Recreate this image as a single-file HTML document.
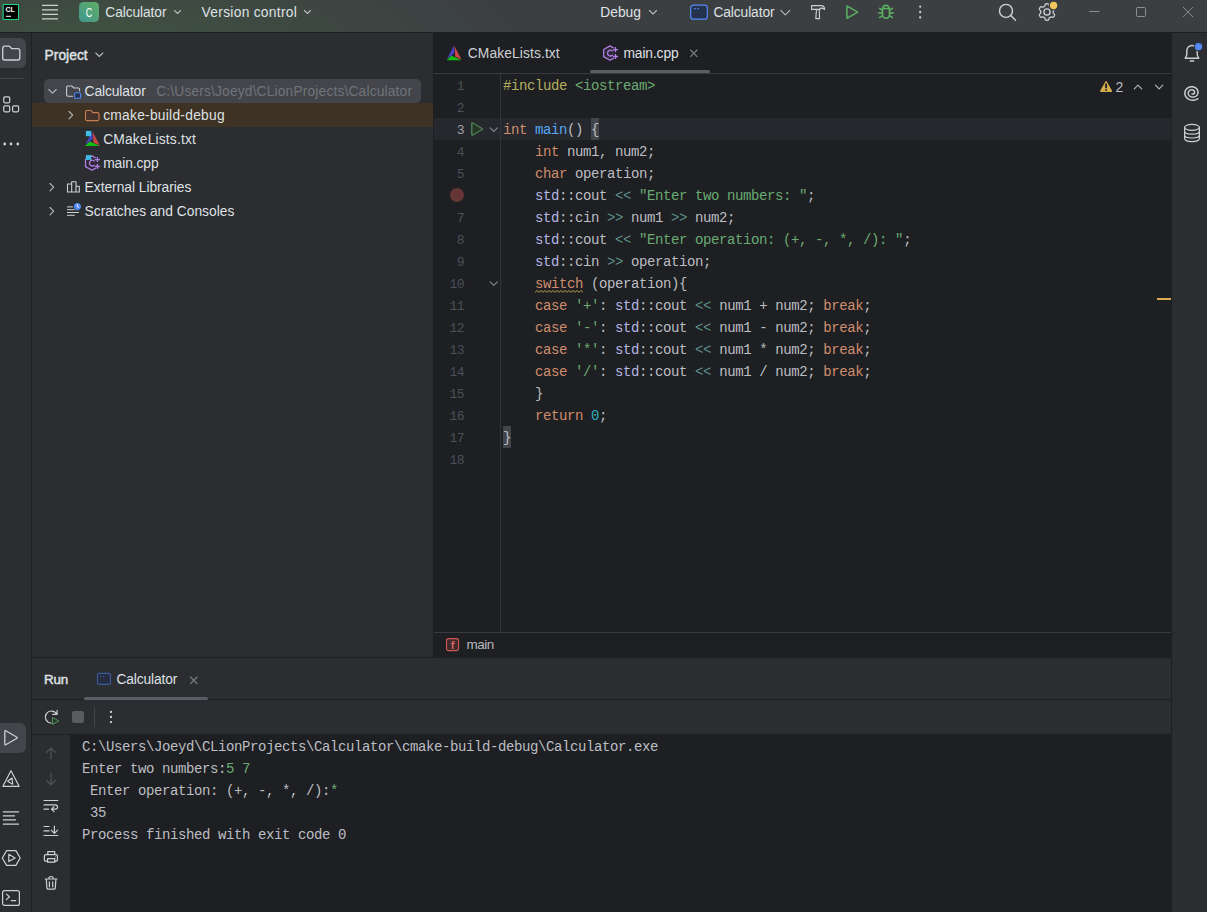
<!DOCTYPE html>
<html lang="en">
<head>
<meta charset="utf-8">
<title>Calculator – main.cpp</title>
<style>
*{box-sizing:border-box;margin:0;padding:0}
html,body{width:1207px;height:912px;overflow:hidden;background:#2b2d30}
body{position:relative;font-family:"Liberation Sans",sans-serif;font-size:13px;color:#dfe1e5}
.abs{position:absolute}
.t{position:absolute;white-space:pre;line-height:16px;height:16px}
svg{position:absolute;left:0;top:0;overflow:visible}
#title{left:0;top:0;width:1207px;height:32px;background:radial-gradient(ellipse 420px 95px at 100px 38px,#405240 0%,#3e4b41 35%,#3d4542 65%,#3c3f41 100%),#3c3f41}
#titleline{left:0;top:32px;width:1207px;height:1px;background:#1e1f22}
#lline{left:31px;top:33px;width:1px;height:879px;background:#1e1f22}
#projline{left:433px;top:33px;width:1px;height:624px;background:#1e1f22}
#editor{left:434px;top:33px;width:737px;height:625px;background:#1e1f22}
#rline{left:1171px;top:33px;width:1px;height:879px;background:#1e1f22}
#runline{left:32px;top:657px;width:1139px;height:1px;background:#1e1f22}
#runhline{left:32px;top:699px;width:1139px;height:1px;background:#1e1f22}
#runtline{left:32px;top:734px;width:1139px;height:1px;background:#1e1f22}
#console{left:70px;top:735px;width:1101px;height:177px;background:#1e1f22}
#tabline{left:434px;top:73px;width:737px;height:1px;background:#393b40}
#bcline{left:434px;top:632px;width:737px;height:1px;background:#393b40}
#gutline{left:500px;top:74px;width:1px;height:558px;background:#313438}
#curline{left:434px;top:118px;width:737px;height:22px;background:#26282e}
#selrow{left:44px;top:79px;width:377px;height:24px;background:#43454a;border-radius:5px}
#exrow{left:32px;top:103px;width:401px;height:24px;background:#3d3223}
#lsel{left:-6px;top:38px;width:32px;height:30px;background:#43454a;border-radius:6px}
#lsel2{left:-6px;top:723px;width:32px;height:30px;background:#43454a;border-radius:6px}
#lsep{left:0;top:78px;width:23px;height:1px;background:#43454a}
#tabul{left:590px;top:70px;width:120px;height:3px;background:#5a5d63;border-radius:1.5px}
#runul{left:84px;top:697px;width:124px;height:3px;background:#5a5d63;border-radius:1.5px}
#mark{left:1157px;top:298px;width:14px;height:2px;background:#d9ae4e}
.mono{font-family:"Liberation Mono",monospace;font-size:14px;letter-spacing:-0.4px}
.code{position:absolute;left:503px;white-space:pre;height:22px;line-height:22px;color:#bcbec4}
.ln{position:absolute;left:434px;width:30px;text-align:right;height:22px;line-height:22px;color:#4b5059;font-family:"Liberation Mono",monospace;font-size:13px;letter-spacing:-0.6px}
.k{color:#cf8e6d}.s{color:#6aab73}.f{color:#56a8f5}.n{color:#2aacb8}.p{color:#b3ae60}.ns{color:#b5b6e3}.o{color:#5f8c8a}
.con{position:absolute;left:82px;white-space:pre;height:22px;line-height:22px;color:#bcbec4}
.brk{position:absolute;width:8px;height:22px;background:#43454a}
</style>
</head>
<body>
<div id="title" class="abs"></div>
<div id="titleline" class="abs"></div>
<div id="lline" class="abs"></div>
<div id="projline" class="abs"></div>
<div id="editor" class="abs"></div>
<div id="rline" class="abs"></div>
<div id="runline" class="abs"></div>
<div id="runhline" class="abs"></div>
<div id="runtline" class="abs"></div>
<div id="console" class="abs"></div>
<div id="tabline" class="abs"></div>
<div id="bcline" class="abs"></div>
<div id="curline" class="abs"></div>
<div id="gutline" class="abs"></div>
<div class="brk" style="left:591px;top:118px"></div>
<div class="brk" style="left:503px;top:426px"></div>
<div id="selrow" class="abs"></div>
<div id="exrow" class="abs"></div>
<div id="lsel" class="abs"></div>
<div id="lsel2" class="abs"></div>
<div id="lsep" class="abs"></div>
<div id="tabul" class="abs"></div>
<div id="runul" class="abs"></div>
<div id="mark" class="abs"></div>
<div class="t" style="left:105.3px;top:5.27px;color:#dfe1e5;font-size:13.8px;letter-spacing:-0.103px">Calculator</div>
<div class="t" style="left:201.6px;top:5.27px;color:#dfe1e5;font-size:13.8px;letter-spacing:0.281px">Version control</div>
<div class="t" style="left:600.3px;top:5.27px;color:#dfe1e5;font-size:13.8px;letter-spacing:-0.018px">Debug</div>
<div class="t" style="left:713.4px;top:5.27px;color:#dfe1e5;font-size:13.8px;letter-spacing:-0.103px">Calculator</div>
<div class="t" style="left:44.5px;top:47.77px;color:#dfe1e5;font-size:13.8px;letter-spacing:0.041px;-webkit-text-stroke:0.45px currentColor">Project</div>
<div class="t" style="left:84.6px;top:84.27px;color:#dfe1e5;font-size:13.8px;letter-spacing:-0.103px">Calculator</div>
<div class="t" style="left:156.2px;top:84.27px;color:#6f737a;font-size:13.8px;letter-spacing:0.153px">C:\Users\Joeyd\CLionProjects\Calculator</div>
<div class="t" style="left:103.2px;top:108.27px;color:#dfe1e5;font-size:13.8px;letter-spacing:0.254px">cmake-build-debug</div>
<div class="t" style="left:103.2px;top:132.27px;color:#dfe1e5;font-size:13.8px;letter-spacing:0.164px">CMakeLists.txt</div>
<div class="t" style="left:103.2px;top:156.27px;color:#dfe1e5;font-size:13.8px;letter-spacing:-0.083px">main.cpp</div>
<div class="t" style="left:84.6px;top:180.27px;color:#dfe1e5;font-size:13.8px;letter-spacing:-0.033px">External Libraries</div>
<div class="t" style="left:84.6px;top:204.27px;color:#dfe1e5;font-size:13.8px;letter-spacing:0.011px">Scratches and Consoles</div>
<div class="t" style="left:467.7px;top:46.27px;color:#ced0d6;font-size:13.8px;letter-spacing:0.118px">CMakeLists.txt</div>
<div class="t" style="left:623.5px;top:46.27px;color:#dfe1e5;font-size:13.8px;letter-spacing:-0.126px">main.cpp</div>
<div class="t" style="left:1115.5px;top:78.70px;color:#bcbec4;font-size:14px;letter-spacing:0.000px">2</div>
<div class="t" style="left:466.5px;top:637.17px;color:#b4b8bf;font-size:13.5px;letter-spacing:-0.522px">main</div>
<div class="t" style="left:44.0px;top:672.41px;color:#dfe1e5;font-size:13.4px;letter-spacing:-0.189px;-webkit-text-stroke:0.45px currentColor">Run</div>
<div class="t" style="left:116.4px;top:672.27px;color:#dfe1e5;font-size:13.8px;letter-spacing:-0.136px">Calculator</div>
<div class="ln" style="top:75.8px">1</div>
<div class="code mono" style="top:74.5px"><span class="p">#include</span> <span class="s">&lt;iostream&gt;</span></div>
<div class="ln" style="top:97.8px">2</div>
<div class="ln" style="top:119.8px;color:#a1a3ab">3</div>
<div class="code mono" style="top:118.5px"><span class="k">int</span> <span class="f">main</span>() {</div>
<div class="ln" style="top:141.8px">4</div>
<div class="code mono" style="top:140.5px">    <span class="k">int</span> num1, num2;</div>
<div class="ln" style="top:163.8px">5</div>
<div class="code mono" style="top:162.5px">    <span class="k">char</span> operation;</div>
<div class="code mono" style="top:184.5px">    <span class="ns">std</span>::cout <span class="o">&lt;&lt;</span> <span class="s">"Enter two numbers: "</span>;</div>
<div class="ln" style="top:207.8px">7</div>
<div class="code mono" style="top:206.5px">    <span class="ns">std</span>::cin <span class="o">&gt;&gt;</span> num1 <span class="o">&gt;&gt;</span> num2;</div>
<div class="ln" style="top:229.8px">8</div>
<div class="code mono" style="top:228.5px">    <span class="ns">std</span>::cout <span class="o">&lt;&lt;</span> <span class="s">"Enter operation: (+, -, *, /): "</span>;</div>
<div class="ln" style="top:251.8px">9</div>
<div class="code mono" style="top:250.5px">    <span class="ns">std</span>::cin <span class="o">&gt;&gt;</span> operation;</div>
<div class="ln" style="top:273.8px">10</div>
<div class="code mono" style="top:272.5px">    <span class="k sw">switch</span> (operation){</div>
<div class="ln" style="top:295.8px">11</div>
<div class="code mono" style="top:294.5px">    <span class="k">case</span> <span class="s">'+'</span>: <span class="ns">std</span>::cout <span class="o">&lt;&lt;</span> num1 + num2; <span class="k">break</span>;</div>
<div class="ln" style="top:317.8px">12</div>
<div class="code mono" style="top:316.5px">    <span class="k">case</span> <span class="s">'-'</span>: <span class="ns">std</span>::cout <span class="o">&lt;&lt;</span> num1 - num2; <span class="k">break</span>;</div>
<div class="ln" style="top:339.8px">13</div>
<div class="code mono" style="top:338.5px">    <span class="k">case</span> <span class="s">'*'</span>: <span class="ns">std</span>::cout <span class="o">&lt;&lt;</span> num1 * num2; <span class="k">break</span>;</div>
<div class="ln" style="top:361.8px">14</div>
<div class="code mono" style="top:360.5px">    <span class="k">case</span> <span class="s">'/'</span>: <span class="ns">std</span>::cout <span class="o">&lt;&lt;</span> num1 / num2; <span class="k">break</span>;</div>
<div class="ln" style="top:383.8px">15</div>
<div class="code mono" style="top:382.5px">    }</div>
<div class="ln" style="top:405.8px">16</div>
<div class="code mono" style="top:404.5px">    <span class="k">return</span> <span class="n">0</span>;</div>
<div class="ln" style="top:427.8px">17</div>
<div class="code mono" style="top:426.5px">}</div>
<div class="ln" style="top:449.8px">18</div>
<div class="con mono" style="top:735.5px">C:\Users\Joeyd\CLionProjects\Calculator\cmake-build-debug\Calculator.exe</div>
<div class="con mono" style="top:757.5px">Enter two numbers:<span class="s">5 7</span></div>
<div class="con mono" style="top:779.5px"> Enter operation: (+, -, *, /):<span class="s">*</span></div>
<div class="con mono" style="top:801.5px"> 35</div>
<div class="con mono" style="top:823.5px">Process finished with exit code 0</div>
<svg width="1207" height="912" viewBox="0 0 1207 912" fill="none" stroke-linecap="round" stroke-linejoin="round">
<defs>
<linearGradient id="gC" x1="0" y1="1" x2="1" y2="0"><stop offset="0" stop-color="#3d978e"/><stop offset="1" stop-color="#62ad66"/></linearGradient>
</defs>
<!-- ===== title bar ===== -->
<g id="i-logo"><rect x="3.5" y="4.5" width="15" height="15" fill="#000" stroke="#21d789" stroke-width="1"/>
<text x="5.400" y="11.900" font-family="Liberation Sans, sans-serif" font-size="7" font-weight="700" fill="#fff" stroke="none">CL</text>
<rect x="6" y="15.8" width="5" height="1" fill="#fff" stroke="none"/></g>
<g id="i-burger" stroke="#ced0d6" stroke-width="1.300" stroke-linecap="butt"><path d="M42 5.3h16M42 9.8h16M42 14.3h16M42 18.8h16"/></g>
<g id="i-projbadge"><rect x="79" y="2" width="20" height="20" rx="4.500" fill="url(#gC)"/><text transform="translate(89,17) scale(0.700,1)" text-anchor="middle" font-family="Liberation Sans, sans-serif" font-size="13" fill="#fff" stroke="none">C</text></g>
<g id="i-chev-title" stroke="#b4b8bf" stroke-width="1.1"><path d="M174.5 10.5l3 3 3-3M304.5 10.5l3 3 3-3M649.5 10.5l3.5 3.5 3.5-3.5M780.8 10.3l4.5 4.5 4.5-4.5"/></g>
<g id="i-runcfg"><rect x="690.7" y="5.2" width="16.6" height="14" rx="2.8" fill="#25324d" stroke="#548af7" stroke-width="1.2"/><path d="M694 8.600h1.600M697.300 8.600h1.600" stroke="#548af7" stroke-width="1.200" stroke-linecap="butt"/></g>
<g id="i-hammer" stroke="#ced0d6" stroke-width="1.100"><path d="M811.600 5.600h9.800c1.900 0 3.100 1.700 3.300 3.900c-1.300-1.100-2.700-1.500-4.600-1.300v1.200h-8.500z"/><path d="M816.500 9.500l-.7 9.100h3.800l-.4-9.100"/></g>
<g id="i-run" stroke="#5aa960" stroke-width="1.600"><path d="M846.900 6v12.200l10.900-6.100z"/></g>
<g id="i-bug" stroke="#5cb262" stroke-width="1.5"><path d="M882.9 8.600a3.100 3.300 0 0 1 6.200 0"/><path d="M882.500 8.600h7v6.100a3.500 3.500 0 0 1-7 0z"/><path d="M882.500 10.400l-2.900-2M878.700 12.900h3.800M882.500 15.700l-2.900 1.900M889.500 10.400l2.900-2M893.300 12.900h-3.800M889.500 15.700l2.900 1.900"/></g>
<g id="i-more" fill="#ced0d6"><circle cx="920.2" cy="6.6" r="1.15"/><circle cx="920.2" cy="12" r="1.15"/><circle cx="920.2" cy="17.4" r="1.15"/></g>
<g id="i-search" stroke="#ced0d6" stroke-width="1.400"><circle cx="1006" cy="10.900" r="6.500"/><path d="M1010.700 15.600l4.800 4.600"/></g>
<g id="i-gear" stroke="#ced0d6" stroke-width="1.300"><circle cx="1047" cy="12" r="3.100"/><path d="M1053.23 12.00 1053.22 12.16 1053.22 12.33 1053.22 12.49 1053.22 12.65 1053.24 12.82 1053.27 12.99 1053.34 13.18 1053.48 13.38 1053.71 13.61 1054.00 13.88 1054.28 14.16 1054.49 14.43 1054.59 14.69 1054.61 14.92 1054.59 15.14 1054.53 15.35 1054.45 15.56 1054.37 15.75 1054.27 15.95 1054.17 16.14 1054.05 16.32 1053.93 16.50 1053.81 16.68 1053.67 16.84 1053.51 17.00 1053.34 17.13 1053.12 17.23 1052.85 17.27 1052.51 17.23 1052.13 17.13 1051.75 17.01 1051.44 16.93 1051.19 16.91 1050.99 16.93 1050.83 16.99 1050.68 17.06 1050.53 17.14 1050.39 17.23 1050.25 17.31 1050.11 17.39 1049.97 17.47 1049.83 17.55 1049.69 17.63 1049.55 17.72 1049.41 17.81 1049.27 17.93 1049.15 18.08 1049.05 18.30 1048.96 18.62 1048.88 19.00 1048.77 19.39 1048.64 19.70 1048.47 19.91 1048.28 20.05 1048.07 20.14 1047.86 20.20 1047.65 20.23 1047.43 20.26 1047.22 20.27 1047.00 20.27 1046.78 20.27 1046.57 20.26 1046.35 20.23 1046.14 20.20 1045.93 20.14 1045.72 20.05 1045.53 19.91 1045.36 19.70 1045.23 19.39 1045.12 19.00 1045.04 18.62 1044.95 18.30 1044.85 18.08 1044.73 17.93 1044.59 17.81 1044.45 17.72 1044.31 17.63 1044.17 17.55 1044.03 17.47 1043.89 17.39 1043.75 17.31 1043.61 17.23 1043.47 17.14 1043.32 17.06 1043.17 16.99 1043.01 16.93 1042.81 16.91 1042.56 16.93 1042.25 17.01 1041.87 17.13 1041.49 17.23 1041.15 17.27 1040.88 17.23 1040.66 17.13 1040.49 17.00 1040.33 16.84 1040.19 16.68 1040.07 16.50 1039.95 16.32 1039.83 16.14 1039.73 15.95 1039.63 15.75 1039.55 15.56 1039.47 15.35 1039.41 15.14 1039.39 14.92 1039.41 14.69 1039.51 14.43 1039.72 14.16 1040.00 13.88 1040.29 13.61 1040.52 13.38 1040.66 13.18 1040.73 12.99 1040.76 12.82 1040.78 12.65 1040.78 12.49 1040.78 12.33 1040.78 12.16 1040.77 12.00 1040.78 11.84 1040.78 11.67 1040.78 11.51 1040.78 11.35 1040.76 11.18 1040.73 11.01 1040.66 10.82 1040.52 10.62 1040.29 10.39 1040.00 10.12 1039.72 9.84 1039.51 9.57 1039.41 9.31 1039.39 9.08 1039.41 8.86 1039.47 8.65 1039.55 8.44 1039.63 8.25 1039.73 8.05 1039.83 7.86 1039.95 7.68 1040.07 7.50 1040.19 7.32 1040.33 7.16 1040.49 7.00 1040.66 6.87 1040.88 6.77 1041.15 6.73 1041.49 6.77 1041.87 6.87 1042.25 6.99 1042.56 7.07 1042.81 7.09 1043.01 7.07 1043.17 7.01 1043.32 6.94 1043.47 6.86 1043.61 6.77 1043.75 6.69 1043.89 6.61 1044.03 6.53 1044.17 6.45 1044.31 6.37 1044.45 6.28 1044.59 6.19 1044.73 6.07 1044.85 5.92 1044.95 5.70 1045.04 5.38 1045.12 5.00 1045.23 4.61 1045.36 4.30 1045.53 4.09 1045.72 3.95 1045.93 3.86 1046.14 3.80 1046.35 3.77 1046.57 3.74 1046.78 3.73 1047.00 3.73 1047.22 3.73 1047.43 3.74 1047.65 3.77 1047.86 3.80 1048.07 3.86 1048.28 3.95 1048.47 4.09 1048.64 4.30 1048.77 4.61 1048.88 5.00 1048.96 5.38 1049.05 5.70 1049.15 5.92 1049.27 6.07 1049.41 6.19 1049.55 6.28 1049.69 6.37 1049.83 6.45 1049.97 6.53 1050.11 6.61 1050.25 6.69 1050.39 6.77 1050.53 6.86 1050.68 6.94 1050.83 7.01 1050.99 7.07 1051.19 7.09 1051.44 7.07 1051.75 6.99 1052.13 6.87 1052.51 6.77 1052.85 6.73 1053.12 6.77 1053.34 6.87 1053.51 7.00 1053.67 7.16 1053.81 7.32 1053.93 7.50 1054.05 7.68 1054.17 7.86 1054.27 8.05 1054.37 8.25 1054.45 8.44 1054.53 8.65 1054.59 8.86 1054.61 9.08 1054.59 9.31 1054.49 9.57 1054.28 9.84 1054.00 10.12 1053.71 10.39 1053.48 10.62 1053.34 10.82 1053.27 11.01 1053.24 11.18 1053.22 11.35 1053.22 11.51 1053.22 11.67 1053.22 11.84z"/></g>
<circle cx="1053.600" cy="5.500" r="4.400" fill="#f2c55c" stroke="#3c3f41" stroke-width="1.400"/>
<g id="i-win" stroke="#8b8e94" stroke-width="1"><path d="M1089.5 11.5h9.5"/><rect x="1136.5" y="7.5" width="9" height="9" rx="1"/><path d="M1183.3 7.3l9.6 9.6M1192.9 7.3l-9.6 9.6"/></g>
<!-- ===== left stripe ===== -->
<g id="i-folder" stroke="#ced0d6" stroke-width="1.3"><path d="M2.7 48.2a2 2 0 0 1 2-2h4.2a1.5 1.5 0 0 1 1.1.5l1.7 1.9h6.1a2 2 0 0 1 2 2v7.400a2 2 0 0 1-2 2h-13.1a2 2 0 0 1-2-2z"/></g>
<g id="i-struct" stroke="#ced0d6" stroke-width="1.2"><rect x="3.7" y="96.8" width="6" height="6" rx="1.2"/><rect x="3.7" y="105.8" width="6" height="6" rx="1.2"/><rect x="12.6" y="105.8" width="6" height="6" rx="1.2"/></g>
<g id="i-ldots" fill="#ced0d6"><circle cx="4.700" cy="144" r="1.400"/><circle cx="11" cy="144" r="1.400"/><circle cx="17.800" cy="144" r="1.400"/></g>
<g id="i-lrun" stroke="#ced0d6" stroke-width="1.3"><path d="M4.8 731.300v13a.6.6 0 0 0 .9.500l11.300-6.500a.6.600 0 0 0 0-1l-11.300-6.500a.6.600 0 0 0-.900.500z"/></g>
<g id="i-lcmake" stroke="#ced0d6" stroke-width="1.200"><path d="M11 770.800l8.100 15.500h-16.200z"/><path d="M7.600 781.300l4.500-3.300.6 6.200z" stroke-width="1.100"/></g>
<g id="i-lmsg" stroke="#ced0d6" stroke-width="1.300" stroke-linecap="butt"><path d="M2.900 811.800h16.100M2.900 815.900h12.100M2.900 819.900h13.100M2.900 824.100h16.100"/></g>
<g id="i-lserv" stroke="#ced0d6" stroke-width="1.200"><path d="M6.600 850.600h9.300l4.300 7.400-4.300 7.400h-9.300l-4.300-7.400z"/><path d="M8.800 854.300v7.300l6.300-3.600z"/></g>
<g id="i-lterm" stroke="#ced0d6" stroke-width="1.200"><rect x="2.600" y="890.600" width="16.800" height="14.800" rx="2"/><path d="M6.400 894.100l3.100 2.600-3.100 2.900M11.200 900.600h4.600"/></g>
<!-- ===== right stripe ===== -->
<g id="i-bell" stroke="#ced0d6" stroke-width="1.400"><path d="M1185.200 58.300h13.600c-1.300-1.600-1.600-2.600-1.600-4.200v-3.400a5.200 5.200 0 0 0-10.400 0v3.400c0 1.600-.300 2.600-1.600 4.200z"/><path d="M1190.300 61h3.400"/></g>
<circle cx="1198.600" cy="46.700" r="4.100" fill="#548af7" stroke="#2b2d30" stroke-width="1"/>
<g id="i-spiral" stroke="#ced0d6" stroke-width="1.450"><path d="M1191.99 93.84 1192.12 93.91 1192.27 93.98 1192.44 94.03 1192.62 94.06 1192.80 94.07 1193.00 94.07 1193.20 94.03 1193.39 93.98 1193.59 93.90 1193.78 93.80 1193.96 93.67 1194.12 93.52 1194.27 93.35 1194.40 93.16 1194.51 92.95 1194.59 92.73 1194.64 92.49 1194.66 92.25 1194.64 91.99 1194.60 91.74 1194.51 91.48 1194.40 91.23 1194.24 90.99 1194.06 90.76 1193.84 90.55 1193.59 90.36 1193.31 90.19 1193.00 90.05 1192.67 89.94 1192.33 89.87 1191.97 89.83 1191.60 89.82 1191.22 89.86 1190.85 89.94 1190.48 90.05 1190.12 90.21 1189.78 90.41 1189.46 90.64 1189.17 90.91 1188.91 91.21 1188.69 91.55 1188.51 91.91 1188.37 92.29 1188.29 92.69 1188.25 93.10 1188.26 93.52 1188.33 93.94 1188.46 94.36 1188.64 94.76 1188.87 95.16 1189.15 95.53 1189.49 95.87 1189.87 96.18 1190.29 96.45 1190.75 96.69 1191.25 96.87 1191.77 97.01 1192.31 97.09 1192.86 97.12 1193.42 97.08 1193.99 97.00 1194.54 96.85 1195.07 96.64 1195.59 96.38 1196.07 96.06 1196.51 95.70 1196.91 95.28 1197.26 94.82 1197.55 94.32 1197.78 93.79 1197.95 93.24 1198.04 92.66 1198.06 92.08 1198.01 91.49 1197.88 90.90 1197.67 90.32 1197.39 89.76 1197.04 89.23 1196.62 88.73 1196.14 88.28 1195.59 87.87 1195.00 87.52 1194.35 87.23 1193.67 87.00 1192.96 86.84 1192.22 86.76 1191.47 86.75 1190.72 86.82 1189.97 86.96 1189.24 87.18 1188.54 87.48 1187.87 87.85 1187.25 88.29 1186.68 88.79 1186.18 89.36 1185.75 89.97 1185.39 90.64 1185.11 91.34 1184.93 92.07 1184.83 92.82 1184.84 93.58 1184.93 94.34 1185.13 95.09 1185.42 95.83 1185.80 96.54 1186.27 97.21 1186.83 97.83 1187.47 98.39 1188.17 98.89 1188.95 99.32 1189.78 99.67 1190.65 99.94 1191.56 100.11 1192.49 100.20 1193.43 100.18 1194.37 100.08 1195.30 99.87 1196.21 99.57 1197.07 99.18 1197.89 98.70"/></g>
<g id="i-db" stroke="#ced0d6" stroke-width="1.2"><ellipse cx="1192" cy="127.400" rx="7.400" ry="3"/><path d="M1184.600 127.400v11.200c0 1.700 3.300 3 7.400 3s7.400-1.300 7.400-3v-11.200M1184.600 131.200c0 1.700 3.300 3 7.400 3s7.400-1.300 7.400-3M1184.600 135c0 1.700 3.300 3 7.400 3s7.400-1.300 7.400-3"/></g>
<!-- ===== project tree ===== -->
<g id="i-chev-tree" stroke="#b4b8bf" stroke-width="1.1"><path d="M48.800 89.500l3.700 3.700 3.700-3.700M69 111.500l3.700 3.700-3.700 3.700M50 183.500l3.700 3.700-3.700 3.700M50 207.500l3.700 3.700-3.700 3.700M95.800 53l3.500 3.500 3.500-3.500"/></g>
<g id="i-rootfolder"><path d="M66.600 87.500a1.500 1.500 0 0 1 1.500-1.500h3.400a1.200 1.200 0 0 1 .9.400l1.500 1.600h4.200a1.500 1.500 0 0 1 1.500 1.500v1.200M72.500 96.300h-4.400a1.500 1.500 0 0 1-1.500-1.500v-7.300" stroke="#ced0d6" stroke-width="1.100"/><rect x="74.600" y="92.800" width="6" height="5.400" rx="1.300" fill="#25324d" stroke="#548af7" stroke-width="1.100"/></g>
<g id="i-exfolder"><path d="M85.500 112a1.500 1.500 0 0 1 1.500-1.500h3.500a1.200 1.200 0 0 1 .9.400l1.500 1.700h4.600a1.500 1.500 0 0 1 1.500 1.500v5a1.500 1.500 0 0 1-1.500 1.500h-10.500a1.500 1.500 0 0 1-1.500-1.500z" fill="#45322b" stroke="#c77d55" stroke-width="1.100"/></g>
<g id="i-cmakefile" stroke="none"><path d="M92.20 131.60L85.20 144.80L89.70 141.60L92.80 138.70z" fill="#4545c4"/><path d="M92.60 131.60L99.80 145.40L93.30 142.40L93.30 138.10z" fill="#cc4545"/><path d="M84.80 146.00L89.90 141.60L99.80 146.00z" fill="#12c012"/><rect x="85.900" y="130.900" width="5.300" height="5.300" fill="#3dbde8"/></g>
<g id="i-cppfile"><path d="M91.90 155.90L85.50 159.50V166.60L91.90 170.20L97.40 167.00V159.20z" fill="#2e2836" stroke="none"/><path d="M95.70 158.00L91.90 155.90L85.50 159.50V166.60L91.90 170.20L95.70 168.10" stroke="#b180e8" stroke-width="1.250" stroke-linecap="butt"/><path d="M94.60 161.30a2.9 2.9 0 1 0 0 3.600" stroke="#b180e8" stroke-width="1.300" stroke-linecap="butt"/><path d="M94.90 159.60h5M97.40 157.10v5M94.90 166.50h5M97.40 164.00v5" stroke="#b180e8" stroke-width="1.300" stroke-linecap="butt"/><rect x="85.900" y="155.100" width="5.300" height="4.800" fill="#3dbde8" stroke="none"/></g>
<g id="i-extlib" stroke="#ced0d6" stroke-width="1.100"><path d="M67.500 192v-8h4.200v8M71.700 192v-10.200h4.300v10.200M76 192v-5.800h3.300v5.800M67.500 192h11.800"/></g>
<g id="i-scratch"><path d="M67 206.900h6M67 209.700h12M67 212.500h12M67 215.300h7.800" stroke="#ced0d6" stroke-width="1" stroke-linecap="butt"/><circle cx="77.400" cy="206.400" r="3.900" fill="#2b2d30" stroke="none"/><circle cx="77.400" cy="206.400" r="3.500" fill="#548af7" stroke="none"/><path d="M77.400 204.500v2.100l1.300.8" stroke="#fff" stroke-width="0.900"/></g>
<!-- ===== editor tabs ===== -->
<g id="i-cmaketab" stroke="none"><path d="M453.90 45.80L446.90 59.00L451.40 55.80L454.50 52.90z" fill="#4545c4"/><path d="M454.30 45.80L461.50 59.60L455.00 56.60L455.00 52.30z" fill="#cc4545"/><path d="M446.50 60.20L451.60 55.80L461.50 60.20z" fill="#12c012"/></g>
<g id="i-cpptab"><path d="M610.00 45.90L603.60 49.50V56.60L610.00 60.20L615.50 57.00V49.20z" fill="#2e2836" stroke="none"/><path d="M613.80 48.00L610.00 45.90L603.60 49.50V56.60L610.00 60.20L613.80 58.10" stroke="#b180e8" stroke-width="1.250" stroke-linecap="butt"/><path d="M612.70 51.30a2.9 2.9 0 1 0 0 3.600" stroke="#b180e8" stroke-width="1.300" stroke-linecap="butt"/><path d="M613.00 49.60h5M615.50 47.10v5M613.00 56.50h5M615.50 54.00v5" stroke="#b180e8" stroke-width="1.300" stroke-linecap="butt"/></g>
<g id="i-tabclose" stroke="#7d8188" stroke-width="1.100"><path d="M690.500 50l6.600 6.600M697.100 50l-6.600 6.600M190.500 677l6.600 6.600M197.100 677l-6.600 6.600"/></g>
<!-- ===== editor gutter / inspections ===== -->
<circle cx="457" cy="195" r="7" fill="#663535" stroke="none"/>
<g id="i-gutrun"><path d="M471.800 123.300v11.400a.5.500 0 0 0 .8.400l9.700-5.700a.5.500 0 0 0 0-.8l-9.700-5.700a.5.500 0 0 0-.8.400z" fill="#253627" stroke="#57965c" stroke-width="1.100"/></g>
<g id="i-fold" stroke="#868a91" stroke-width="1.100"><path d="M490.200 127.800l3.600 3.600 3.600-3.600M490.200 281.800l3.600 3.600 3.600-3.600"/></g>
<g id="i-warn"><path d="M1106.100 82.100l5.100 9h-10.200z" fill="#d4ac4e" stroke="#d4ac4e" stroke-width="1.900"/><path d="M1106.100 83.500v4.800M1106.100 89.300v1.400" stroke="#1e1f22" stroke-width="1.800" stroke-linecap="butt"/></g>
<g id="i-insparrows" stroke="#b4b8bf" stroke-width="1.100"><path d="M1134.300 88.800l3.700-3.700 3.700 3.700M1155.400 85.200l3.700 3.700 3.700-3.700"/></g>
<path id="wavy" d="M535 292.300L537 290.5L539 292.3L541 290.5L543 292.3L545 290.5L547 292.3L549 290.5L551 292.3L553 290.5L555 292.3L557 290.5L559 292.3L561 290.5L563 292.3L565 290.5L567 292.3L569 290.5L571 292.3L573 290.5L575 292.3L577 290.5L579 292.3L581 290.5L583 292.3" stroke="#c8a84a" stroke-width="0.900" stroke-linecap="butt" stroke-linejoin="miter"/>
<!-- ===== breadcrumb ===== -->
<g id="i-fn"><rect x="446.500" y="638.600" width="12.100" height="12" rx="2.400" fill="#402929" stroke="#d05a5a" stroke-width="1.100"/><text transform="translate(452.700,649) scale(1.350,1)" text-anchor="middle" font-family="Liberation Sans, sans-serif" font-size="11.500" fill="#e06c6c" stroke="none">f</text></g>
<!-- ===== run tool window ===== -->
<g id="i-runtabicon"><rect x="97.500" y="673.400" width="13" height="11" rx="2.200" fill="#252c3f" stroke="#3b5b9c" stroke-width="1.100"/><path d="M100 676.600h1.200M102.600 676.600h1.600" stroke="#3b5b9c" stroke-width="1" stroke-linecap="butt"/></g>
<g id="i-rerun"><path d="M57.100 710.400v3.900h-4.500M56.800 714.300a6 6 0 1 0-5.800 8.700" stroke="#ced0d6" stroke-width="1.200"/><path d="M52.500 717.900v6.500l5.900-3.250z" fill="#253627" stroke="#57965c" stroke-width="1"/></g>
<rect x="72" y="711" width="12" height="12" rx="2" fill="#5a5b5e" stroke="none"/>
<path d="M94.500 707.500v19" stroke="#43454a" stroke-width="1"/>
<g fill="#ced0d6" stroke="none"><circle cx="111" cy="711.900" r="1.150"/><circle cx="111" cy="717" r="1.150"/><circle cx="111" cy="722.100" r="1.150"/></g>
<g id="i-updown" stroke="#4e5157" stroke-width="1.300"><path d="M51 758.800v-10.600M46.700 752.200l4.300-4.300 4.300 4.300M51 773.200v11.200M46.700 780.500l4.300 4.300 4.300-4.300"/></g>
<g id="i-softwrap" stroke="#ced0d6" stroke-width="1.200"><path d="M44 800.500h13.800M44 804.900h11.400a2.150 2.150 0 0 1 0 4.300h-3.600M44 809.200h4.600M54 806.700l-2.500 2.500 2.500 2.500"/></g>
<g id="i-scrollend" stroke="#ced0d6" stroke-width="1.200"><path d="M44 826.500h5M44 830.900h5M44 835.500h13.800M54.400 826v7.300M51.200 830.200l3.200 3.200 3.200-3.200"/></g>
<g id="i-print" stroke="#ced0d6" stroke-width="1.200"><path d="M47.800 854.600v-3h6.900v3M47.400 861.200h-1.500a1.500 1.500 0 0 1-1.500-1.500v-3.600a1.500 1.500 0 0 1 1.500-1.500h10a1.500 1.500 0 0 1 1.500 1.500v3.600a1.500 1.500 0 0 1-1.500 1.500h-1M47.600 858.700h7.200v3.500h-7.200z"/><circle cx="55.300" cy="856.700" r=".500" fill="#ced0d6" stroke="none"/></g>
<g id="i-trash" stroke="#ced0d6" stroke-width="1.200"><path d="M45.300 879h11.600M48.800 878.800a2.300 2.300 0 0 1 4.600 0M46.300 879.300l.6 8.600a1.400 1.400 0 0 0 1.400 1.300h5.600a1.400 1.400 0 0 0 1.400-1.300l.6-8.600M49.400 881.800v5M52.700 881.800v5"/></g>
</svg>

</body>
</html>
